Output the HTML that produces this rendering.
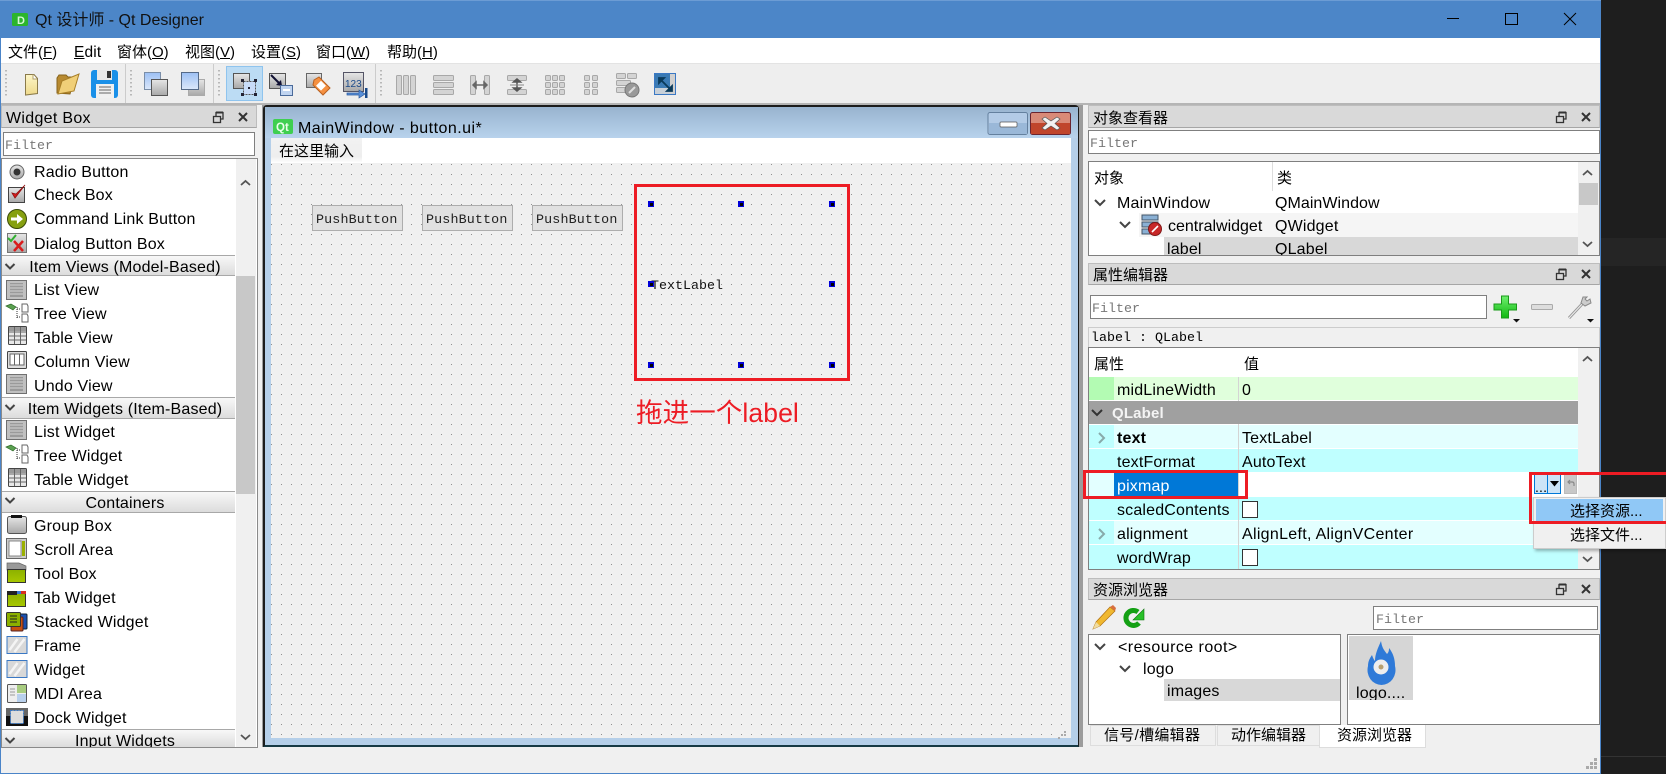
<!DOCTYPE html>
<html><head><meta charset="utf-8"><title>Qt Designer</title>
<style>
html,body{margin:0;padding:0;background:#1e1e1e;width:1666px;height:774px;overflow:hidden}
body{position:relative;font-family:"Liberation Sans","Noto Sans CJK SC",sans-serif;color:#000}
div,span.t{position:absolute;box-sizing:border-box}
.t{white-space:nowrap;font-size:16px;line-height:20px;height:20px;margin-top:1px;letter-spacing:.17px}
.c{font-size:15px;letter-spacing:0}
.m{font-family:"Liberation Mono",monospace;font-size:13.33px;margin-top:2px;letter-spacing:0}
.f{color:#777}
.box{background:#fff;border:1px solid #7f7f7f}
.dh{background:#d9d9d9;border:1px solid #bdbdbd;border-bottom-color:#a6a6a6}
.sec{left:2px;width:233px;background:linear-gradient(#f8f8f8,#dcdcdc);border-top:1px solid #a8a8a8;border-bottom:1px solid #a8a8a8}
.ctr{left:0;width:250px;text-align:center}
.pb{background:#e1e1e1;border:1px solid #adadad;top:205px;height:26px;width:91px}
u{text-decoration:underline}
b{font-weight:700}
</style></head><body>

<div style="left:1601px;top:238px;width:65px;height:28px;background:#252525"></div>
<div style="left:1601px;top:756px;width:65px;height:1px;background:#333"></div>

<!-- main window -->
<div style="left:0;top:0;width:1601px;height:774px;background:#f0f0f0;border:1px solid #4a84c8;border-top:0"></div>
<div style="left:0;top:0;width:1601px;height:38px;background:#4c86c8;border-top:1px solid #6c9cd4"></div>
<div class="t" style="left:35px;top:10px;font-size:16px;color:#111;letter-spacing:0">Qt 设计师 - Qt Designer</div>
<div style="left:1px;top:38px;width:1599px;height:25px;background:#fff"></div>
<div style="left:1px;top:63px;width:1599px;height:1px;background:#e3e3e3"></div>
<div style="left:1px;top:64px;width:1599px;height:39px;background:#eee"></div>
<div style="left:1px;top:103px;width:1599px;height:2px;background:#b5b5b5"></div>

<div class="t c" style="left:8px;top:42px">文件(<u>F</u>)</div>
<div class="t" style="left:74px;top:42px;font-size:15.5px"><u>E</u>dit</div>
<div class="t c" style="left:117px;top:42px">窗体(<u>O</u>)</div>
<div class="t c" style="left:185px;top:42px">视图(<u>V</u>)</div>
<div class="t c" style="left:251px;top:42px">设置(<u>S</u>)</div>
<div class="t c" style="left:316px;top:42px">窗口(<u>W</u>)</div>
<div class="t c" style="left:387px;top:42px">帮助(<u>H</u>)</div>

<div style="left:226px;top:66px;width:37px;height:35px;background:#bcdcf4;border:1px solid #8fc4ee"></div>
<div style="left:125px;top:64px;width:1px;height:39px;background:#ccc"></div>
<div style="left:213px;top:64px;width:1px;height:39px;background:#ccc"></div>
<div style="left:375px;top:64px;width:1px;height:39px;background:#ccc"></div>

<!-- Widget box -->
<div class="dh" style="left:1px;top:105px;width:256px;height:23px"></div>
<div class="t" style="left:6px;top:108px;letter-spacing:.3px">Widget Box</div>
<div class="box" style="left:3px;top:132px;width:252px;height:24px"></div>
<div class="t m f" style="left:5px;top:135px">Filter</div>
<div style="left:1px;top:158px;width:257px;height:590px;background:#fff;border:1px solid #8a8a8a"></div>
<div style="left:236px;top:159px;width:20px;height:588px;background:#f0f0f0"></div>
<div style="left:236px;top:276px;width:19px;height:218px;background:#c8c8c8"></div>

<div class="t" style="left:34px;top:162px">Radio Button</div>
<div class="t" style="left:34px;top:185px">Check Box</div>
<div class="t" style="left:34px;top:209px">Command Link Button</div>
<div class="t" style="left:34px;top:234px">Dialog Button Box</div>
<div class="sec" style="top:255px;height:21px"></div><div class="t ctr" style="top:257px">Item Views (Model-Based)</div>
<div class="t" style="left:34px;top:280px">List View</div>
<div class="t" style="left:34px;top:304px">Tree View</div>
<div class="t" style="left:34px;top:328px">Table View</div>
<div class="t" style="left:34px;top:352px">Column View</div>
<div class="t" style="left:34px;top:376px">Undo View</div>
<div class="sec" style="top:397px;height:22px"></div><div class="t ctr" style="top:399px">Item Widgets (Item-Based)</div>
<div class="t" style="left:34px;top:422px">List Widget</div>
<div class="t" style="left:34px;top:446px">Tree Widget</div>
<div class="t" style="left:34px;top:470px">Table Widget</div>
<div class="sec" style="top:491px;height:22px"></div><div class="t ctr" style="top:493px">Containers</div>
<div class="t" style="left:34px;top:516px">Group Box</div>
<div class="t" style="left:34px;top:540px">Scroll Area</div>
<div class="t" style="left:34px;top:564px">Tool Box</div>
<div class="t" style="left:34px;top:588px">Tab Widget</div>
<div class="t" style="left:34px;top:612px">Stacked Widget</div>
<div class="t" style="left:34px;top:636px">Frame</div>
<div class="t" style="left:34px;top:660px">Widget</div>
<div class="t" style="left:34px;top:684px">MDI Area</div>
<div class="t" style="left:34px;top:708px">Dock Widget</div>
<div class="sec" style="top:729px;height:18px;border-bottom:0"></div>
<div style="left:0;top:729px;width:250px;height:18px;overflow:hidden"><div class="t" style="left:0;width:250px;text-align:center;top:2px">Input Widgets</div></div>

<!-- MDI -->
<div style="left:262px;top:105px;width:821px;height:642px;background:#9c9c9c"></div>
<div style="left:263px;top:105px;width:816px;height:642px;background:#b5cfe9;border-style:solid;border-width:2px 1px 2px 2px;border-color:#1c1c1c;border-bottom-color:#173a44;border-top-left-radius:4px;border-top-right-radius:4px"></div>
<div style="left:265px;top:107px;width:813px;height:31px;background:linear-gradient(#98b3cf,#b8d2ec)"></div>
<div class="t" style="left:298px;top:118px;letter-spacing:.47px">MainWindow - button.ui*</div>
<div style="left:271px;top:138px;width:800px;height:25px;background:#fff"></div>
<div style="left:271px;top:138px;width:91px;height:25px;background:linear-gradient(#f2f2f2,#eee 75%,#fff)"></div>
<div class="t c" style="left:279px;top:141px">在这里输入</div>
<div style="left:271px;top:163px;width:800px;height:575px;background:#f0f0f0"></div>

<svg style="position:absolute;left:271px;top:163px" width="800" height="575" shape-rendering="crispEdges"><defs><pattern id="g" width="10" height="10" patternUnits="userSpaceOnUse" x="0" y="1"><rect width="1" height="1" fill="#909090"/></pattern></defs><rect width="800" height="575" fill="url(#g)"/></svg>

<div class="pb" style="left:312px"></div><div class="t m" style="left:316px;top:209px;color:#222;letter-spacing:.15px">PushButton</div>
<div class="pb" style="left:422px"></div><div class="t m" style="left:426px;top:209px;color:#222;letter-spacing:.15px">PushButton</div>
<div class="pb" style="left:532px"></div><div class="t m" style="left:536px;top:209px;color:#222;letter-spacing:.15px">PushButton</div>
<div class="t m" style="left:651px;top:275px;color:#111">TextLabel</div>

<div style="left:634px;top:184px;width:216px;height:197px;border:3px solid #ed1c24"></div>
<div class="t" style="left:636px;top:396px;font-size:26.5px;line-height:32px;height:32px;color:#ed1c24;letter-spacing:.1px">拖进一个label</div>

<!-- Object inspector -->
<div class="dh" style="left:1088px;top:105px;width:512px;height:23px"></div>
<div class="t c" style="left:1093px;top:108px">对象查看器</div>
<div class="box" style="left:1088px;top:130px;width:512px;height:24px"></div>
<div class="t m f" style="left:1090px;top:133px">Filter</div>
<div class="box" style="left:1088px;top:161px;width:512px;height:95px"></div>
<div style="left:1272px;top:162px;width:1px;height:29px;background:#ddd"></div>
<div class="t c" style="left:1094px;top:168px">对象</div>
<div class="t c" style="left:1277px;top:168px">类</div>
<div class="t" style="left:1117px;top:193px">MainWindow</div>
<div class="t" style="left:1275px;top:193px;letter-spacing:.05px">QMainWindow</div>
<div style="left:1139px;top:213px;width:439px;height:24px;background:#f5f5f5"></div>
<div class="t" style="left:1168px;top:216px;letter-spacing:0">centralwidget</div>
<div class="t" style="left:1275px;top:216px">QWidget</div>
<div style="left:1164px;top:237px;width:414px;height:18px;background:#d8d8d8;overflow:hidden"><div class="t" style="left:3px;top:2px">label</div><div class="t" style="left:111px;top:2px">QLabel</div></div>
<div style="left:1578px;top:162px;width:21px;height:93px;background:#f0f0f0"></div>
<div style="left:1579px;top:183px;width:19px;height:22px;background:#c8c8c8"></div>

<!-- Property editor -->
<div class="dh" style="left:1088px;top:263px;width:512px;height:22px"></div>
<div class="t c" style="left:1093px;top:265px">属性编辑器</div>
<div class="box" style="left:1090px;top:295px;width:397px;height:24px"></div>
<div class="t m f" style="left:1092px;top:298px">Filter</div>
<div style="left:1088px;top:327px;width:512px;height:20px;background:#f0f0f0;border:1px solid #ccc;border-bottom:0"></div>
<div class="t m" style="left:1091px;top:327px">label : QLabel</div>
<div class="box" style="left:1088px;top:347px;width:512px;height:223px"></div>
<div style="left:1578px;top:348px;width:21px;height:221px;background:#f0f0f0"></div>
<div class="t c" style="left:1094px;top:354px">属性</div>
<div class="t c" style="left:1244px;top:354px">值</div>

<div style="left:1089px;top:377px;width:489px;height:23px;background:#e0ffdc"></div><div style="left:1089px;top:377px;width:25px;height:23px;background:#b3fbb3"></div>
<div style="left:1089px;top:425px;width:489px;height:23px;background:#e3ffff"></div><div style="left:1089px;top:425px;width:25px;height:23px;background:#bfffff"></div>
<div style="left:1089px;top:449px;width:489px;height:23px;background:#bfffff"></div>
<div style="left:1089px;top:473px;width:25px;height:23px;background:#e3ffff"></div><div style="left:1114px;top:473px;width:124px;height:23px;background:#0078d7"></div>
<div style="left:1089px;top:497px;width:489px;height:23px;background:#bfffff"></div>
<div style="left:1089px;top:521px;width:489px;height:23px;background:#e3ffff"></div><div style="left:1089px;top:521px;width:25px;height:23px;background:#bfffff"></div>
<div style="left:1089px;top:545px;width:489px;height:24px;background:#bfffff"></div>
<div style="left:1238px;top:377px;width:1px;height:192px;background:#d4d4d4"></div>
<div style="left:1089px;top:401px;width:489px;height:23px;background:#a0a0a0"></div>

<div class="t" style="left:1117px;top:380px">midLineWidth</div><div class="t" style="left:1242px;top:380px">0</div>
<div class="t" style="left:1112px;top:403px;color:#f4f4f4;font-weight:700;font-size:15px">QLabel</div>
<div class="t" style="left:1117px;top:428px"><b>text</b></div><div class="t" style="left:1242px;top:428px">TextLabel</div>
<div class="t" style="left:1117px;top:452px">textFormat</div><div class="t" style="left:1242px;top:452px">AutoText</div>
<div class="t" style="left:1117px;top:476px;color:#fff">pixmap</div>
<div class="t" style="left:1117px;top:500px">scaledContents</div>
<div class="box" style="left:1242px;top:501px;width:16px;height:17px;border-color:#333"></div>
<div class="t" style="left:1117px;top:524px">alignment</div><div class="t" style="left:1242px;top:524px;letter-spacing:.3px">AlignLeft, AlignVCenter</div>
<div class="t" style="left:1117px;top:548px">wordWrap</div>
<div class="box" style="left:1242px;top:549px;width:16px;height:17px;border-color:#333"></div>

<div style="left:1534px;top:474px;width:14px;height:20px;background:#cce4f7;border:1px solid #0078d7;border-right:0"></div>
<div class="t" style="left:1535px;top:476px;font-size:14px">...</div>
<div style="left:1547px;top:474px;width:14px;height:20px;background:#cce4f7;border:1px solid #0078d7"></div>
<div style="left:1564px;top:474px;width:13px;height:20px;background:#c8c8c8;border:1px solid #bbb"></div>

<!-- Popup menu -->
<div style="left:1533px;top:497px;width:133px;height:52px;background:#f0f0f0;border:1px solid #ccc;box-shadow:2px 2px 3px rgba(0,0,0,.3)"></div>
<div style="left:1536px;top:499px;width:127px;height:23px;background:#90c8f6"></div>
<div class="t c" style="left:1570px;top:501px">选择资源...</div>
<div class="t c" style="left:1570px;top:525px">选择文件...</div>

<!-- Red annotation boxes -->
<div style="left:1083px;top:470px;width:165px;height:29px;border:3px solid #ed1c24"></div>
<div style="left:1529px;top:472px;width:137px;height:52px;border:3px solid #ed1c24;border-right:0"></div>

<!-- Resource browser -->
<div class="dh" style="left:1088px;top:578px;width:512px;height:22px"></div>
<div class="t c" style="left:1093px;top:580px">资源浏览器</div>
<div class="box" style="left:1373px;top:606px;width:225px;height:24px"></div>
<div class="t m f" style="left:1376px;top:609px">Filter</div>
<div class="box" style="left:1088px;top:634px;width:253px;height:91px"></div>
<div class="t" style="left:1118px;top:637px;letter-spacing:.45px">&lt;resource root&gt;</div>
<div class="t" style="left:1143px;top:659px">logo</div>
<div style="left:1164px;top:679px;width:176px;height:22px;background:#d8d8d8"></div>
<div class="t" style="left:1167px;top:681px">images</div>
<div class="box" style="left:1347px;top:634px;width:253px;height:91px"></div>
<div style="left:1349px;top:636px;width:64px;height:64px;background:#d6d6d6;overflow:hidden"><div class="t" style="left:7px;top:47px">logo....</div></div>

<div style="left:1090px;top:725px;width:126px;height:21px;background:#f0f0f0;border:1px solid #ddd"></div>
<div class="t c" style="left:1104px;top:725px;letter-spacing:.3px">信号/槽编辑器</div>
<div style="left:1217px;top:725px;width:103px;height:21px;background:#f0f0f0;border:1px solid #ddd"></div>
<div class="t c" style="left:1231px;top:725px">动作编辑器</div>
<div style="left:1319px;top:725px;width:107px;height:23px;background:#fff;border:1px solid #ddd;border-top:0"></div>
<div class="t c" style="left:1337px;top:725px">资源浏览器</div>

<!-- ICONS -->
<svg style="position:absolute;left:0;top:0" width="1666" height="774" viewBox="0 0 1666 774">
<defs>
<linearGradient id="gy" x1="0" y1="0" x2="0" y2="1"><stop offset="0" stop-color="#e6e6e6"/><stop offset="1" stop-color="#a8a8a8"/></linearGradient>
<linearGradient id="bl" x1="0" y1="0" x2="0" y2="1"><stop offset="0" stop-color="#9cc0f4"/><stop offset="1" stop-color="#dce8fa"/></linearGradient>
<linearGradient id="yl" x1="0" y1="0" x2="0" y2="1"><stop offset="0" stop-color="#fdf6c8"/><stop offset="1" stop-color="#eed98a"/></linearGradient>
<linearGradient id="gn" x1="0" y1="0" x2="0" y2="1"><stop offset="0" stop-color="#8cb000"/><stop offset="1" stop-color="#a8c800"/></linearGradient>
<linearGradient id="plus" x1="0" y1="0" x2="0" y2="1"><stop offset="0" stop-color="#6ff06f"/><stop offset="1" stop-color="#10b810"/></linearGradient>
<g id="listi"><rect x=".5" y=".5" width="20" height="19" fill="#c0c0c0" stroke="#707070"/><rect x="4" y="3" width="13" height="14" fill="#9a9a9a"/><path d="M4 5h13M4 8h13M4 11h13M4 14h13" stroke="#d4d4d4"/></g>
<g id="treei"><path d="M0 2l5-2 5 3-3 3z" fill="#5aa050" stroke="#2e6a2a" stroke-width=".7"/><path d="M11 3v12M11 5h4M11 13h4" stroke="#333" stroke-dasharray="1 1" fill="none"/><path d="M16 0h5l1 2v6h-6zM16 10h5l1 2v6h-6z" fill="#fff" stroke="#666"/></g>
<g id="tablei"><rect x=".5" y=".5" width="18" height="18" rx="1" fill="#e8e8e8" stroke="#444"/><rect x="1" y="1" width="17" height="4" fill="#999"/><path d="M1 6h17M1 10h17M1 14h17M6.500 1v17M12.500 1v17" stroke="#666"/></g>
<g id="frame"><rect x=".5" y=".5" width="20" height="17" fill="#d8d8d8" stroke="#3a78c4"/><path d="M3 14l8-11M8 16l10-13" stroke="#f4f4f4" stroke-width="2.500"/></g>
</defs>

<!-- title icon -->
<rect x="12" y="13" width="16" height="13" rx="1.500" fill="#2cb52c"/>
<text x="17" y="24" font-family="Liberation Sans" font-size="11" font-weight="700" fill="#d8f8d8">D</text>
<!-- main window controls -->
<g fill="none" stroke="#000" stroke-width="1">
<path d="M1447 18.500h12"/><rect x="1505.500" y="13.500" width="12" height="11"/><path d="M1564 13l12 12M1576 13l-12 12"/>
</g>

<!-- toolbar grips -->
<g fill="#b8b8b8">
<path d="M5 70h2v1.500H5zM5 74h2v1.500H5zM5 78h2v1.500H5zM5 82h2v1.500H5zM5 86h2v1.500H5zM5 90h2v1.500H5zM5 94h2v1.500H5z"/>
<path d="M130 70h2v1.500h-2zM130 74h2v1.500h-2zM130 78h2v1.500h-2zM130 82h2v1.500h-2zM130 86h2v1.500h-2zM130 90h2v1.500h-2zM130 94h2v1.500h-2z"/>
<path d="M218 70h2v1.500h-2zM218 74h2v1.500h-2zM218 78h2v1.500h-2zM218 82h2v1.500h-2zM218 86h2v1.500h-2zM218 90h2v1.500h-2zM218 94h2v1.500h-2z"/>
<path d="M380 70h2v1.500h-2zM380 74h2v1.500h-2zM380 78h2v1.500h-2zM380 82h2v1.500h-2zM380 86h2v1.500h-2zM380 90h2v1.500h-2zM380 94h2v1.500h-2z"/>
</g>
<!-- new -->
<path d="M25.500 74.500h8.500l3.500 4v15l-12 1.500z" fill="url(#yl)" stroke="#8a7a4a"/>
<path d="M33 74.500v4.500h4" fill="#fff" stroke="#b0a070"/>
<!-- open -->
<path d="M57 93V78l2-3h7l2 2h5l1 2-4 15z" fill="#b88a30" stroke="#86631c"/>
<path d="M58 94l4-13 17-7-5 17z" fill="#f0cf78" stroke="#a87f28"/>
<!-- save -->
<rect x="91" y="70" width="27" height="28" rx="3" fill="#1a90e8"/>
<path d="M97 70h15v10H97z" fill="#e8e8e8"/><rect x="107" y="71" width="4" height="7" fill="#333"/>
<rect x="96" y="84" width="18" height="14" fill="#f0f0f0"/><path d="M99 87h12M99 90h12M99 93h12" stroke="#666"/>
<!-- copy/paste -->
<rect x="144.500" y="72.500" width="16" height="17" fill="url(#bl)" stroke="#7a8ea8"/>
<rect x="151.500" y="79.500" width="16" height="16" fill="url(#gy)" stroke="#555"/>
<rect x="188.500" y="79.500" width="16" height="16" fill="url(#gy)" stroke="#aaa"/>
<rect x="181.500" y="72.500" width="17" height="17" fill="url(#bl)" stroke="#556a88"/>
<!-- edit widgets (selected) -->
<rect x="233.500" y="73.500" width="16" height="15" fill="url(#gy)" stroke="#555"/>
<rect x="243.500" y="81.500" width="12" height="13" fill="#c8dcf8" stroke="#555" stroke-dasharray="2 1"/>
<g fill="#223"><rect x="241" y="79" width="3" height="3"/><rect x="254" y="79" width="3" height="3"/><rect x="241" y="93" width="3" height="3"/><rect x="254" y="93" width="3" height="3"/><rect x="248" y="87" width="2" height="2"/></g>
<!-- buddy -->
<rect x="269.500" y="73.500" width="16" height="15" fill="url(#gy)" stroke="#555"/>
<path d="M271 75l9 9" stroke="#113" stroke-width="2"/><path d="M282 86l-1-6-5 5z" fill="#113"/>
<rect x="280.500" y="85.500" width="12" height="10" fill="#c0d4f0" stroke="#4a6a9a"/><rect x="283" y="89" width="7" height="2" fill="#fff"/>
<!-- tag -->
<rect x="306.500" y="73.500" width="15" height="14" fill="url(#gy)" stroke="#666"/>
<path d="M314 80l5-3 11 11-7 7-10-10z" fill="#f59040" stroke="#b86020"/><rect x="318" y="82" width="7" height="7" fill="#fff" transform="rotate(45 321 85)"/>
<!-- tab order -->
<rect x="343.500" y="72.500" width="20" height="19" fill="url(#gy)" stroke="#556"/>
<text x="345" y="87" font-family="Liberation Sans" font-size="10" fill="#1a4a8a">123</text>
<path d="M347 93h12v-3l6 4-6 4v-3h-12z" fill="#5a90d8" stroke="#2a5aa0" stroke-width=".7"/><rect x="365" y="88" width="2.500" height="10" fill="#1a4a8a"/>

<!-- disabled layout icons -->
<g fill="#d4d4d4" stroke="#a8a8a8">
<rect x="396.500" y="75.500" width="5" height="19" rx="1"/><rect x="403.500" y="75.500" width="5" height="19" rx="1"/><rect x="410.500" y="75.500" width="5" height="19" rx="1"/>
<rect x="433.500" y="75.500" width="20" height="5" rx="1"/><rect x="433.500" y="82.500" width="20" height="5" rx="1"/><rect x="433.500" y="89.500" width="20" height="5" rx="1"/>
<rect x="470.500" y="75.500" width="5" height="19" rx="1"/><rect x="484.500" y="75.500" width="5" height="19" rx="1"/>
<rect x="507.500" y="75.500" width="19" height="5" rx="1"/><rect x="507.500" y="89.500" width="19" height="5" rx="1"/>
<g><rect x="545.500" y="75.500" width="5" height="5" rx="1"/><rect x="552.500" y="75.500" width="5" height="5" rx="1"/><rect x="559.500" y="75.500" width="5" height="5" rx="1"/><rect x="545.500" y="82.500" width="5" height="5" rx="1"/><rect x="552.500" y="82.500" width="5" height="5" rx="1"/><rect x="559.500" y="82.500" width="5" height="5" rx="1"/><rect x="545.500" y="89.500" width="5" height="5" rx="1"/><rect x="552.500" y="89.500" width="5" height="5" rx="1"/><rect x="559.500" y="89.500" width="5" height="5" rx="1"/></g>
<rect x="584.500" y="75.500" width="5" height="5" rx="1"/><rect x="592.500" y="75.500" width="5" height="5" rx="1"/><rect x="584.500" y="82.500" width="5" height="5" rx="1"/><rect x="592.500" y="82.500" width="5" height="5" rx="1"/><rect x="584.500" y="89.500" width="5" height="5" rx="1"/><rect x="592.500" y="89.500" width="5" height="5" rx="1"/>
<rect x="616.500" y="73.500" width="9" height="5" rx="1"/><rect x="627.500" y="73.500" width="9" height="5" rx="1"/><rect x="616.500" y="80.500" width="14" height="5" rx="1"/><rect x="616.500" y="87.500" width="10" height="5" rx="1"/>
</g>
<path d="M473 85h14M473 85l3-3v6zM487 85l-3-3v6z" stroke="#666" stroke-width="1.500" fill="#666"/>
<path d="M517 79v12M517 79l-3.500 3h7zM517 91l-3.500-3h7z" stroke="#555" stroke-width="1.500" fill="#555"/><path d="M510 85h14" stroke="#888"/>
<circle cx="632" cy="90" r="7" fill="#999" stroke="#777"/><path d="M629 93l6-6" stroke="#ddd" stroke-width="2"/>
<!-- adjust size -->
<rect x="654.500" y="73.500" width="21" height="21" fill="#c8d0d8" stroke="#3a78c4"/>
<rect x="655" y="74" width="15" height="14" fill="#3a7ab4"/><rect x="670" y="74" width="5" height="20" fill="#d0d0d0"/>
<path d="M659 78l13 13M659 78l5 0-5 5zM672 91l-5 0 5-5z" stroke="#0a3a5a" stroke-width="1.800" fill="#0a3a5a"/>

<!-- sub-window icon and controls -->
<rect x="273" y="119" width="20" height="15" rx="2" fill="#3fcf50"/>
<text x="276" y="131" font-family="Liberation Sans" font-size="11.500" font-weight="700" fill="#eaffea">Qt</text>
<rect x="988" y="112.500" width="39.500" height="22" rx="2" fill="#b3cbe6" stroke="#64809e"/>
<rect x="989" y="123" width="38" height="11" fill="#9ab8d8"/>
<rect x="1000" y="122" width="17" height="5" rx="1" fill="#fff" stroke="#555" stroke-width=".7"/>
<rect x="1030.500" y="112.500" width="40" height="22" rx="2" fill="#d98a78" stroke="#6a2430"/>
<rect x="1031" y="123" width="39" height="11" fill="#c0452c"/>
<path d="M1045 117l6 4 6-4 3 2-5 4.500 5 4.500-3 2-6-4-6 4-3-2 5-4.500-5-4.500z" fill="#f2f2f2" stroke="#555" stroke-width=".7"/>

<!-- form handles -->
<g fill="#0000d8">
<rect x="648" y="201" width="6" height="6"/><rect x="738" y="201" width="6" height="6"/><rect x="829" y="201" width="6" height="6"/>
<rect x="648" y="281" width="6" height="6"/><rect x="829" y="281" width="6" height="6"/>
<rect x="648" y="362" width="6" height="6"/><rect x="738" y="362" width="6" height="6"/><rect x="829" y="362" width="6" height="6"/>
</g>
<g fill="#000">
<rect x="650" y="203" width="3" height="3"/><rect x="740" y="203" width="3" height="3"/><rect x="831" y="203" width="3" height="3"/>
<rect x="650" y="283" width="3" height="3"/><rect x="831" y="283" width="3" height="3"/>
<rect x="650" y="364" width="3" height="3"/><rect x="740" y="364" width="3" height="3"/><rect x="831" y="364" width="3" height="3"/>
</g>

<!-- dock float/close buttons -->
<g id="dk"><rect x="213.500" y="116.500" width="7" height="6" fill="none" stroke="#333" stroke-width="1.300"/><path d="M216 116v-3.500h7v6.500h-2.500" fill="none" stroke="#333" stroke-width="1.300"/><path d="M216 112.500h7" stroke="#333" stroke-width="2"/><path d="M239 113l8 8M247 113l-8 8" stroke="#333" stroke-width="2"/></g>
<use href="#dk" x="1343"/>
<use href="#dk" x="1343" y="157"/>
<use href="#dk" x="1343" y="472"/>

<!-- scroll arrows, chevrons -->
<g fill="none" stroke="#555" stroke-width="1.800">
<path d="M241 185l4.500-4 4.500 4M241 735l4.500 4 4.500-4"/>
<path d="M1583 175l4.500-4 4.500 4M1583 242l4.500 4 4.500-4"/>
<path d="M1583 361l4.500-4 4.500 4M1583 557l4.500 4 4.500-4"/>
</g>
<g fill="none" stroke="#444" stroke-width="2">
<path d="M5.500 264l4.500 4.500 4.500-4.500M5.500 405l4.500 4.500 4.500-4.500M5.500 498l4.500 4.500 4.500-4.500M5.500 738l4.500 4.500 4.500-4.500"/>
<path d="M1095 200l5 5 5-5M1120 222l5 5 5-5"/>
<path d="M1095 644l5 5 5-5M1120 666l5 5 5-5"/>
<path d="M1092 410l5 5 5-5" stroke="#333"/>
</g>
<g fill="none" stroke="#8aa" stroke-width="2"><path d="M1099 433l5 5-5 5M1099 529l5 5-5 5"/></g>

<!-- widget box icons -->
<circle cx="17" cy="172" r="7" fill="url(#gy)" stroke="#666"/><circle cx="17" cy="172" r="3.500" fill="#333"/>
<rect x="8.500" y="187.500" width="16" height="15" fill="url(#gy)" stroke="#444"/><path d="M12 193l3 5 10-13-9 9z" fill="#d81c1c" stroke="#901010" stroke-width=".8"/>
<circle cx="17" cy="219" r="9.500" fill="#86a010" stroke="#3a4a08"/><path d="M11 217.500h6v-3.500l6 5-6 5v-3.500h-6z" fill="#fff"/>
<rect x="7.500" y="233.500" width="19" height="19" fill="url(#gy)" stroke="#777"/><path d="M8 238l3 3 5-6" fill="none" stroke="#30b030" stroke-width="2"/><path d="M14 241l9 10M23 241l-9 10" stroke="#d81c1c" stroke-width="2.500"/>

<use href="#listi" x="6" y="280"/><use href="#treei" x="6" y="304"/><use href="#tablei" x="8" y="326"/>
<rect x="7.500" y="351.500" width="19" height="17" rx="1" fill="#ddd" stroke="#444"/><rect x="10" y="354" width="14" height="11" fill="#fff" stroke="#666"/><path d="M14.500 354v11M19.500 354v11" stroke="#666"/>
<use href="#listi" x="6" y="374"/>
<use href="#listi" x="6" y="420"/><use href="#treei" x="6" y="445"/><use href="#tablei" x="8" y="468"/>

<rect x="7.500" y="516.500" width="19" height="17" rx="2" fill="url(#gy)" stroke="#555"/><rect x="11" y="515" width="11" height="3" fill="#111"/>
<rect x="6.500" y="538.500" width="20" height="20" fill="#ccc" stroke="#666"/><rect x="9" y="541" width="12" height="15" fill="#fff" stroke="#888"/><rect x="22" y="541" width="3" height="15" fill="#9ab000"/>
<path d="M7 563h12l7 3v4H7z" fill="#999" stroke="#666" stroke-width=".7"/><rect x="7.500" y="569.500" width="18" height="13" fill="url(#gn)" stroke="#333"/>
<rect x="7.500" y="592.500" width="18" height="14" fill="url(#gn)" stroke="#333"/><rect x="7" y="591" width="10" height="4" fill="#222"/><rect x="17" y="591" width="4" height="3" fill="#3a78d4"/><rect x="21" y="591" width="5" height="3" fill="#d83020"/>
<rect x="16" y="614" width="11" height="15" rx="1" fill="#1a50b0" stroke="#123"/><rect x="11" y="617" width="12" height="14" rx="1" fill="#c85010" stroke="#522"/><rect x="6.500" y="612.500" width="14" height="14" rx="1" fill="#8cb000" stroke="#333"/><path d="M10 616h7M10 619h7M10 622h7" stroke="#222"/>
<use href="#frame" x="6.500" y="636"/><use href="#frame" x="6.500" y="660"/>
<rect x="7.500" y="684.500" width="19" height="18" rx="1" fill="#eee" stroke="#555"/><rect x="17" y="685" width="9" height="8" fill="#a8cc80"/><rect x="17" y="694" width="9" height="8" fill="#b8d0ec"/><path d="M10 689h5M10 692h5M10 695h5" stroke="#999"/>
<rect x="6" y="708" width="22" height="18" fill="#111"/><rect x="6" y="708" width="22" height="8" fill="#666"/><rect x="10.500" y="710.500" width="13" height="13" fill="#ddd" stroke="#3a78c4" stroke-dasharray="2 1"/>

<!-- centralwidget icon -->
<rect x="1142" y="215" width="16" height="5" fill="#8ab0d4" stroke="#456"/><rect x="1142" y="222" width="16" height="5" fill="#8ab0d4" stroke="#456"/><rect x="1142" y="229" width="10" height="5" fill="#8ab0d4" stroke="#456"/>
<circle cx="1155" cy="229" r="6.500" fill="#c82828" stroke="#801818"/><path d="M1152 232l6-6" stroke="#fff" stroke-width="1.600"/>

<!-- plus / minus / wrench -->
<path d="M1501.500 296h7v8h8v6h-8v8h-7v-8h-7.500v-6h7.500z" fill="url(#plus)" stroke="#1a9a1a"/>
<path d="M1513 319h7l-3.500 3.500z" fill="#111"/>
<rect x="1531.500" y="304.500" width="21" height="5" rx="1" fill="#ddd" stroke="#aaa"/>
<path d="M1569 318l15-16" stroke="#999" stroke-width="3"/><path d="M1569 318l15-16" stroke="#eee" stroke-width="1"/><path d="M1583 297l-2 6 4 3 6-3-1-4-3 2-2-2 2-2z" fill="#ccc" stroke="#888"/>
<path d="M1587 319h7l-3.500 3.500z" fill="#111"/>

<!-- pixmap buttons -->
<path d="M1550 481h9l-4.500 5.500z" fill="#000"/>
<path d="M1570 484l-2-2 2-2M1568 482h4q2 0 2 2v2" fill="none" stroke="#888" stroke-width="1.200"/>

<!-- pencil/refresh -->
<path d="M1093 629l3-7 14-15 5 4-15 15z" fill="#f0b830" stroke="#b07010" stroke-width=".7"/><path d="M1110 607l5 4 1-3-3-3z" fill="#d87040"/><path d="M1093 629l3-7 4 4z" fill="#f0dca0"/>
<path d="M1139 623a7.500 7.500 0 1 1-1-11" fill="none" stroke="#14a014" stroke-width="5"/><path d="M1144 609v11h-11z" fill="#28c028" stroke="#0a700a" stroke-width=".6"/>

<!-- logo -->
<path d="M1381 641c1 7 3 9 6 13 2-2 2-4 2-6 4 5 6 11 6 18a14 15 0 1 1-27 0c0-5 2-8 4-11 1 3 2 5 3 6 0-7 3-13 6-20z" fill="#2f7ad8"/>
<circle cx="1381" cy="667" r="7.500" fill="#eee"/><circle cx="1381" cy="667" r="2.500" fill="#b8a070"/>

<!-- size grip -->
<g fill="#aaa"><rect x="1594" y="758" width="3" height="3"/><rect x="1590" y="762" width="3" height="3"/><rect x="1594" y="762" width="3" height="3"/><rect x="1586" y="766" width="3" height="3"/><rect x="1590" y="766" width="3" height="3"/><rect x="1594" y="766" width="3" height="3"/></g>
<g fill="#aaa"><rect x="1064" y="731" width="2" height="2"/><rect x="1061" y="734" width="2" height="2"/><rect x="1064" y="734" width="2" height="2"/><rect x="1058" y="737" width="2" height="2"/></g>
</svg>
</body></html>
